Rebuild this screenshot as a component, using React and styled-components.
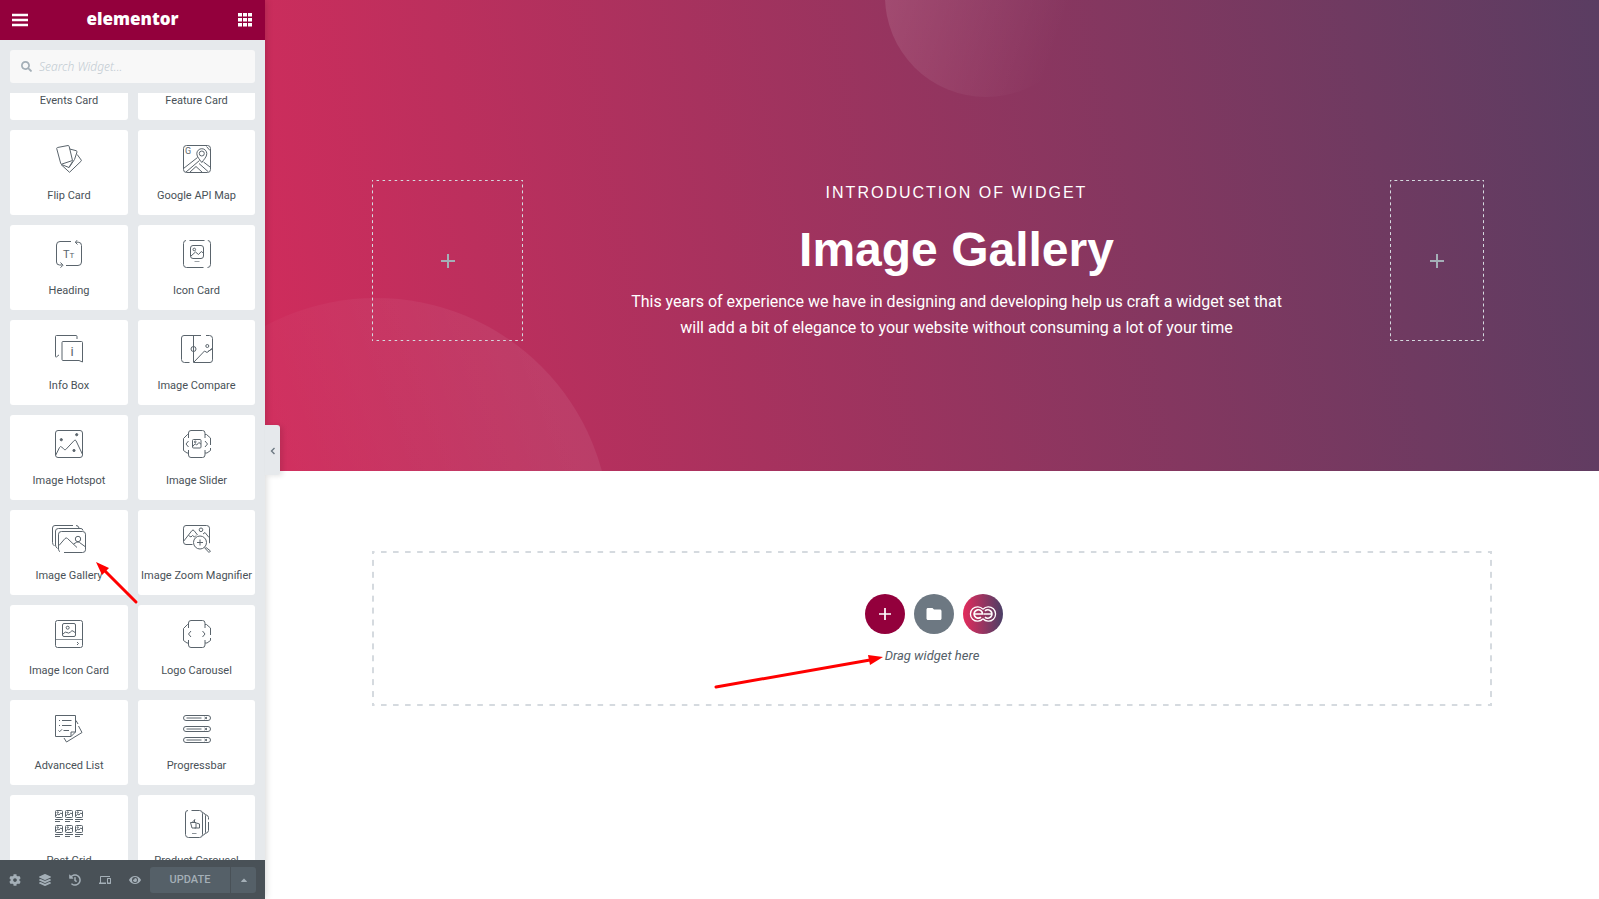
import React, { useEffect, useRef } from "react";
import styled, { createGlobalStyle, css } from "styled-components";
import {
  FaCog,
  FaLayerGroup,
  FaHistory,
  FaEye,
  FaCaretUp,
  FaSearch,
} from "react-icons/fa";
import { MdOutlineDevices, MdFolder } from "react-icons/md";

const LIST_SCROLL = 58;

/* Widget icons, drawn on a 36x28 grid */

const Letter = styled.text`
  font-size: ${(p) => p.$size}px;
  fill: currentColor;
  stroke: none;
`;

const ImageGlyph = ({ x, y, w, h }) => (
  <g>
    <rect x={x} y={y} width={w} height={h} rx="1" />
    <path
      d={`M${x} ${y + h * 0.85}l${w * 0.3} ${-h * 0.35} ${w * 0.2} ${h * 0.15} ${w * 0.25} ${-h * 0.3} ${w * 0.25} ${h * 0.2}`}
    />
    <circle cx={x + w * 0.32} cy={y + h * 0.28} r={w * 0.1} />
  </g>
);

const CarouselFrame = () => (
  <g>
    <path d="M9.5 8V3A2.5 2.5 0 0 1 12 .5h11.5A2.5 2.5 0 0 1 26 3v5" />
    <path d="M9.5 20v5a2.5 2.5 0 0 0 2.5 2.5h11.5A2.5 2.5 0 0 0 26 25v-5" />
    <path d="M9.5 4.5h-1l-4 4v12L8 23h1.5M26 4.5h1.5l4 3.5v7M31.5 18v2.5L28 23h-2" />
  </g>
);

const icons = {
  card: (
    <g>
      <rect x="4.5" y=".5" width="27" height="27" rx="3" />
      <path d="M4.5 9h27M10 16h16M10 21h10" />
    </g>
  ),
  flip: (
    <g>
      <path d="M6.5 2.5 17 .5q1 0 1.2 1l3.300 14-11 3.700q-.6 0-.8-.8L5.700 3.500q0-.8.8-1z" />
      <path d="M18.7 4l6.500 1.700q1 .4.8 1.300l-2.500 7.500-5.500 8-7.500-3" />
      <path d="M26.2 9.500l4 5.500q.4.600-.1 1.200L18.500 27.300 10 19.500M18 22.500l3.500-6" />
    </g>
  ),
  map: (
    <g>
      <rect x="4.5" y=".5" width="27" height="27" rx="3" />
      <path d="M22.8 17.500c-2-3-5-5.600-5-8.800a5 5 0 0 1 10 0c0 3.200-3 5.800-5 8.800z" />
      <circle cx="22.8" cy="8.5" r="2.5" />
      <path d="M4.5 23.500l14-11M7 27l13.500-11.500M10.500 27.500l6.500-6 6.500 6M20 18.500l9 8M24.500 17l6.500 5M27.500 1.500l3.500 4" />
      <Letter x="6" y="9" $size={9}>
        G
      </Letter>
    </g>
  ),
  heading: (
    <g>
      <path d="M20 1.500H9A3.500 3.500 0 0 0 5.500 5v17a3 3 0 0 0 3 3h2.800M9.500 22.500l2.500 2.700-2.500 2.500" />
      <path d="M15 25.500h12a3.500 3.500 0 0 0 3.500-3.500V5.500a3.300 3.300 0 0 0-3.300-3.300h-2.500M26.500 0l-2.300 2.200 2.300 2.300" />
      <Letter x="12" y="18" $size={11}>
        T
      </Letter>
      <Letter x="18.5" y="18" $size={8}>
        T
      </Letter>
    </g>
  ),
  iconCard: (
    <g>
      <path d="M7 .5Q4.500.5 4.500 3.500v21q0 3 3 3h17M28.500 27.500q3 0 3-3v-21q0-3-2.700-3M10.500.5h15" />
      <rect x="11.5" y="5.5" width="13" height="13" rx="2.5" />
      <path d="M12 16l4.500-4 3 2.500 2.800-3 2 1.500" />
      <circle cx="15.3" cy="9.5" r="1.3" />
      <path d="M15.5 21.500h5" opacity=".6" />
    </g>
  ),
  info: (
    <g>
      <path d="M26 4V1.500q0-1-1-1H5.500q-1 0-1 1V21.500q0 .8 1 .4l2.500-2" />
      <path d="M12 6.500h18.500q1 0 1 1v19.500l-3.500-1.500H12q-1 0-1-1v-17q0-1 1-1z" />
      <Letter x="19.5" y="20.5" $size={13}>
        i
      </Letter>
    </g>
  ),
  compare: (
    <g>
      <path d="M22 .5H5Q2.500.5 2.500 3v21.500q0 3 3 3h5M14.500.5v27h16.500q2.500 0 2.500-2.700V3.500q0-3-3-3H27" />
      <circle cx="14.5" cy="14" r="2.5" />
      <path d="M15 27l10.500-11 2.500 1.500 5-4M29 16.500l4-2.500" />
      <circle cx="28.3" cy="11" r="1.5" />
    </g>
  ),
  hotspot: (
    <g>
      <rect x="4.5" y=".5" width="27" height="27" rx="2.5" />
      <path d="M4.8 25l3.700-7.500q1-1.700 2.200-.5l2.500 2.500q.8.700 1.600 0l8.400-9q1-1 1.800.2l6.300 13.300" />
      <circle cx="10.3" cy="9.7" r="1.1" fill="currentColor" />
      <circle cx="25.7" cy="4.7" r="1.1" fill="currentColor" />
      <circle cx="23" cy="20.5" r="1.1" fill="currentColor" />
    </g>
  ),
  slider: (
    <g>
      <CarouselFrame />
      <path d="M9.5 11L7 14l2.500 3M26 11l2.500 3-2.500 3" />
      <ImageGlyph x={13.5} y={9.5} w={8.5} h={8.5} />
    </g>
  ),
  gallery: (
    <g>
      <path d="M22 .5H4Q1.500.5 1.500 3v14.500q0 2 2 3.500M25 .5q2.500 0 3 2.500" />
      <path d="M30 3.500H7.500q-3 0-3 2.500v14q0 2 2 3.500M30 3.500q1.500 0 2 2" />
      <path d="M13 27.500h18.500q3 0 3-2.700V9.200q0-2.700-3-2.700h-21q-3 0-3 2.700v15q0 1.800 1.500 2.500" />
      <path d="M8 20.500l6-7q1.200-1.200 2.500 0l9.500 9M22.500 19l3-1.700q1.700-.8 3 .2l5.500 4" />
      <circle cx="27" cy="14" r="2.7" />
    </g>
  ),
  zoom: (
    <g>
      <path d="M13.5 19.500H7q-2.500 0-2.500-2.700V3.200Q4.500.5 7 .5h20.500q3 0 3 2.700v15" />
      <path d="M4.8 16L13 5.500q1-1 2 0l3.500 4.500M9.500 10.500L12 12l1.500-1.500 2 1.500 1.500-1.500M24 9l2-1.500 4 5" />
      <circle cx="22" cy="4.8" r="1.8" />
      <circle cx="21" cy="17.5" r="6.5" />
      <path d="M21 14.500v6M18 17.500h6M25.500 22.500l1.500 1M27 22.500l4.500 3.500-1.500 1.500-4-4.200" />
    </g>
  ),
  imageIcon: (
    <g>
      <rect x="4.5" y=".5" width="27" height="27" rx="2" />
      <path d="M4.5 19.500h27" opacity=".7" />
      <rect x="11.5" y="3.5" width="13" height="13" rx="1.5" />
      <path d="M12 14q2.500-3 4-1.500t3.500-.5q1.500-2 2.500-1l2 1.500" />
      <circle cx="16.7" cy="7.7" r="1.5" />
      <path d="M26 22l1.500 1.500L26 25" />
    </g>
  ),
  carousel: (
    <g>
      <CarouselFrame />
      <path d="M12 11l-2.500 3 2.500 3M23.500 11l2.500 3-2.500 3" />
    </g>
  ),
  list: (
    <g>
      <path d="M20 21.500H4.500V.5h20V17zM20 21.500V17h4.500" />
      <path d="M11 5.500h9.500M11 10.500h9.500M12.500 15.500H18M8 5.500h1M8 10.500h1M7.500 15.500l1.200 1.200 2.300-2.400" />
      <path d="M25 5.500l2 3.500M27.500 11l3.500 6.500L15.500 27 13 23" />
    </g>
  ),
  progress: (
    <g>
      {[0.5, 11.5, 22.5].map((y) => (
        <g key={y}>
          <rect x="4.5" y={y} width="27" height="5" rx="2.5" />
          <path d={`M7.5 ${y + 2.5}h15M25.5 ${y + 1.5}l2.5 2m0-2l-2.5 2`} />
        </g>
      ))}
    </g>
  ),
  grid: (
    <g>
      {[0.5, 15.5].map((y) =>
        [4.5, 14.5, 24.5].map((x) => (
          <g key={`${x}-${y}`}>
            <ImageGlyph x={x} y={y} w={7} h={7} />
            <path d={`M${x - 0.5} ${y + 9}h8M${x - 0.5} ${y + 11}h5`} />
          </g>
        ))
      )}
    </g>
  ),
  product: (
    <g>
      <path d="M9 .5Q6.500.5 6.500 3v21.500q0 3 3 3h11q3 0 3-3V3.500q0-3-3-3h-8" />
      <path d="M23.500 2.500q3 .8 3 3v17q0 2-3 3M26.500 4.500q3 1 3 3v2M29.500 12v8.500q0 2-3 3" />
      <path d="M11.500 12.500H17V18h-4zM13 12.500l3-3M15.500 9.500v3M17.500 13l3 1v4h-5" />
      <path d="M13 23.500h4.500" opacity=".7" />
    </g>
  ),
};

const widgets = [
  { name: "Events Card", icon: "card" },
  { name: "Feature Card", icon: "card" },
  { name: "Flip Card", icon: "flip" },
  { name: "Google API Map", icon: "map" },
  { name: "Heading", icon: "heading" },
  { name: "Icon Card", icon: "iconCard" },
  { name: "Info Box", icon: "info" },
  { name: "Image Compare", icon: "compare" },
  { name: "Image Hotspot", icon: "hotspot" },
  { name: "Image Slider", icon: "slider" },
  { name: "Image Gallery", icon: "gallery", pointed: true },
  { name: "Image Zoom Magnifier", icon: "zoom" },
  { name: "Image Icon Card", icon: "imageIcon" },
  { name: "Logo Carousel", icon: "carousel" },
  { name: "Advanced List", icon: "list" },
  { name: "Progressbar", icon: "progress" },
  { name: "Post Grid", icon: "grid" },
  { name: "Product Carousel", icon: "product" },
];

const tools = [
  { name: "Settings", Icon: FaCog },
  { name: "Navigator", Icon: FaLayerGroup },
  { name: "History", Icon: FaHistory },
  { name: "Responsive Mode", Icon: MdOutlineDevices },
  { name: "Preview Changes", Icon: FaEye },
];

function Panel() {
  const listRef = useRef(null);

  useEffect(() => {
    listRef.current.scrollTop = LIST_SCROLL;
  }, []);

  return (
    <Sidebar>
      <PanelHeader>
        <HeaderButton aria-label="Menu">
          <svg width="18" height="14" viewBox="0 0 18 14">
            <path d="M1 2h16M1 7h16M1 12h16" stroke="#fff" strokeWidth="2.4" />
          </svg>
        </HeaderButton>
        <Brand>elementor</Brand>
        <HeaderButton aria-label="Widgets Panel">
          <svg width="14" height="14" viewBox="0 0 14 14" fill="#fff">
            {[0, 5, 10].map((y) =>
              [0, 5, 10].map((x) => (
                <rect key={`${x}-${y}`} x={x} y={y} width="4" height="3.5" />
              ))
            )}
          </svg>
        </HeaderButton>
      </PanelHeader>

      <SearchBox>
        <FaSearch size={11} aria-hidden="true" />
        <SearchInput
          type="text"
          placeholder="Search Widget..."
          aria-label="Search Widget"
        />
      </SearchBox>

      <WidgetList ref={listRef}>
        {widgets.map(({ name, icon, pointed }) => (
          <Widget key={name}>
            <WidgetIcon viewBox="0 0 36 28" aria-hidden="true">
              {icons[icon]}
            </WidgetIcon>
            {name}
            {pointed && (
              <WidgetArrow viewBox="0 0 44 44" aria-hidden="true">
                <path d="M41 41 10 10" />
                <polygon points="1,1 14,7 7,14" />
              </WidgetArrow>
            )}
          </Widget>
        ))}
      </WidgetList>

      <PanelFooter>
        {tools.map(({ name, Icon }) => (
          <ToolButton key={name} aria-label={name}>
            <Icon size={12} />
          </ToolButton>
        ))}
        <UpdateButton>UPDATE</UpdateButton>
        <OptionsButton aria-label="Save Options">
          <FaCaretUp size={10} />
        </OptionsButton>
      </PanelFooter>

      <CollapseButton aria-label="Hide Panel">
        <svg width="6" height="8" viewBox="0 0 6 8" fill="none">
          <path d="M4.5 1l-3 3 3 3" stroke="#6d7882" strokeWidth="1.4" />
        </svg>
      </CollapseButton>
    </Sidebar>
  );
}

const Plus = ({ size, weight }) => (
  <svg width={size} height={size} viewBox="0 0 14 14" aria-hidden="true">
    <path d="M7 0v14M0 7h14" stroke="currentColor" strokeWidth={weight} />
  </svg>
);

function Hero() {
  return (
    <HeroSection>
      <HeroShapes aria-hidden="true">
        <defs>
          <linearGradient id="glow-top" x1="0" y1="0.3" x2="0.9" y2="0.6">
            <stop offset="0" stopColor="#fff" stopOpacity="0.12" />
            <stop offset="1" stopColor="#fff" stopOpacity="0" />
          </linearGradient>
          <linearGradient id="glow-side" x1="0.9" y1="0.2" x2="0.1" y2="0.5">
            <stop offset="0" stopColor="#fff" stopOpacity="0.07" />
            <stop offset="1" stopColor="#fff" stopOpacity="0" />
          </linearGradient>
        </defs>
        <circle cx="721" cy="-4" r="101" fill="url(#glow-top)" />
        <circle cx="111" cy="532" r="234" fill="url(#glow-side)" />
      </HeroShapes>
      <HeroColumns>
        <EmptyColumn aria-label="Add Widget">
          <Plus size={14} weight={2} />
        </EmptyColumn>
        <HeroText>
          <Eyebrow>INTRODUCTION OF WIDGET</Eyebrow>
          <Title>Image Gallery</Title>
          <Lead>
            This years of experience we have in designing and developing help us
            craft a widget set that will add a bit of elegance to your website
            without consuming a lot of your time
          </Lead>
        </HeroText>
        <EmptyColumn aria-label="Add Widget">
          <Plus size={14} weight={2} />
        </EmptyColumn>
      </HeroColumns>
    </HeroSection>
  );
}

function DropArea() {
  return (
    <DropZone>
      <AddButtons>
        <RoundButton $bg="#93003c" aria-label="Add New Section">
          <Plus size={12} weight={2} />
        </RoundButton>
        <RoundButton $bg="#6d7882" aria-label="Add Template">
          <MdFolder size={18} />
        </RoundButton>
        <RoundButton
          $bg="linear-gradient(90deg, #e52b5c, #4a3f66)"
          aria-label="Add Exclusive Block"
        >
          <svg width="28" height="18" viewBox="0 0 28 18" fill="none">
            <g stroke="#fff" strokeWidth="1.3">
              <path d="M14 4.200A7.200 7.200 0 1 0 14 13.800" />
              <path d="M14 4.200A7.200 7.200 0 1 1 14 13.800" />
            </g>
            <g stroke="#fff" strokeWidth="1.7">
              <path d="M5.500 9h8A4.200 4.200 0 1 0 12 12.200" />
              <path d="M14.500 9h8M16 5.800a4.200 4.200 0 1 1 0 6.400" />
            </g>
          </svg>
        </RoundButton>
      </AddButtons>
      <DropHint>Drag widget here</DropHint>
      <DropArrow viewBox="0 0 170 36" aria-hidden="true">
        <path d="M2 33 156 6" />
        <polygon points="169,3 154,1 156,11" />
      </DropArrow>
    </DropZone>
  );
}

export default function App() {
  return (
    <Page>
      <GlobalStyle />
      <Panel />
      <Preview>
        <Hero />
        <DropArea />
      </Preview>
    </Page>
  );
}

const GlobalStyle = createGlobalStyle`
  *, *::before, *::after {
    box-sizing: border-box;
  }

  body {
    margin: 0;
    background: #fff;
    font-family: Roboto, "Liberation Sans", sans-serif;
  }

  button {
    padding: 0;
    border: 0;
    background: none;
    font: inherit;
    color: inherit;
    cursor: pointer;
  }
`;

/* Dashes and gaps of equal length, with a dash on every corner */
const dashedEdges = (width, dash) => css`
  --dash: #d5dadf 0 ${dash}px, transparent 0;
  background:
    linear-gradient(90deg, var(--dash)) -${dash / 2}px 0 / ${dash * 2}px ${width}px round no-repeat,
    linear-gradient(90deg, var(--dash)) -${dash / 2}px 100% / ${dash * 2}px ${width}px round no-repeat,
    linear-gradient(180deg, var(--dash)) 0 -${dash / 2}px / ${width}px ${dash * 2}px no-repeat round,
    linear-gradient(180deg, var(--dash)) 100% -${dash / 2}px / ${width}px ${dash * 2}px no-repeat round;
`;

const Page = styled.div`
  display: flex;
  height: 100vh;
  overflow: hidden;
`;

const Sidebar = styled.aside`
  position: relative;
  z-index: 1;
  display: flex;
  flex-direction: column;
  flex: none;
  width: 265px;
  background: #e6e9ec;
  box-shadow: 0 0 8px rgba(0, 0, 0, 0.2);
`;

const PanelHeader = styled.header`
  display: flex;
  align-items: center;
  justify-content: space-between;
  height: 40px;
  padding: 0 11px;
  background: #93003c;
`;

const HeaderButton = styled.button`
  display: grid;
  place-items: center;
  width: 18px;
  height: 40px;
`;

const Brand = styled.span`
  font-family: "Noto Sans", sans-serif;
  font-size: 17px;
  font-weight: 900;
  line-height: 38px;
  height: 40px;
  color: #fff;
`;

const SearchBox = styled.div`
  display: flex;
  align-items: center;
  gap: 7px;
  height: 33px;
  margin: 10px;
  padding: 0 11px;
  border-radius: 3px;
  background: #f8f8f8;
  color: #a4afb7;
`;

const SearchInput = styled.input`
  flex: 1;
  min-width: 0;
  padding: 0;
  border: 0;
  outline: 0;
  background: none;
  font-family: "Noto Sans", sans-serif;
  font-size: 12px;
  font-style: italic;
  font-weight: 300;
  color: #495157;

  &::placeholder {
    color: #c2cbd2;
    opacity: 1;
  }
`;

const WidgetList = styled.div`
  flex: 1;
  min-height: 0;
  display: grid;
  grid-template-columns: 118px 1fr;
  grid-auto-rows: 85px;
  gap: 10px;
  padding: 0 10px 10px;
  overflow-y: auto;
  scrollbar-width: none;
`;

const Widget = styled.button`
  position: relative;
  display: flex;
  flex-direction: column;
  align-items: center;
  gap: 15px;
  padding-top: 15px;
  border-radius: 3px;
  background: #fff;
  font-size: 11px;
  line-height: 16px;
  white-space: nowrap;
  color: #495157;
`;

const WidgetIcon = styled.svg`
  flex: none;
  width: 36px;
  height: 28px;
  fill: none;
  stroke: currentColor;
  stroke-width: 1;
  color: #5a646c;
`;

const Arrow = styled.svg`
  position: absolute;
  z-index: 2;
  fill: #f00;
  stroke: none;
  pointer-events: none;

  path {
    stroke: #f00;
    stroke-width: 3;
    stroke-linecap: round;
  }
`;

const WidgetArrow = styled(Arrow)`
  left: 85px;
  top: 51px;
  width: 44px;
  height: 44px;
`;

const PanelFooter = styled.footer`
  display: flex;
  align-items: center;
  height: 39px;
  padding-right: 9px;
  background: #495157;
  color: #a4afb7;
`;

const ToolButton = styled.button`
  display: grid;
  place-items: center;
  width: 30px;
  height: 39px;
`;

const UpdateButton = styled.button`
  flex: 1;
  height: 26px;
  border-radius: 3px 0 0 3px;
  background: #556068;
  font-size: 11px;
  font-weight: 500;
`;

const OptionsButton = styled.button`
  display: grid;
  place-items: center;
  width: 26px;
  height: 26px;
  border-left: 1px solid #495157;
  border-radius: 0 3px 3px 0;
  background: #556068;
`;

const CollapseButton = styled.button`
  position: absolute;
  left: 100%;
  top: 50%;
  width: 15px;
  height: 50px;
  transform: translateY(-50%);
  border-radius: 0 3px 3px 0;
  background: #e6e9ec;
  box-shadow: 3px 1px 5px rgba(0, 0, 0, 0.1);
`;

const Preview = styled.main`
  flex: 1;
  min-width: 0;
  overflow: hidden;
`;

const HeroSection = styled.section`
  position: relative;
  padding: 180px 20px 130px;
  background: linear-gradient(80deg, #d12c5c, #5a3d62);
`;

const HeroShapes = styled.svg`
  position: absolute;
  inset: 0;
  width: 100%;
  height: 100%;
`;

const HeroColumns = styled.div`
  position: relative;
  display: grid;
  grid-template-columns: 151fr 867fr 94fr;
  max-width: 1120px;
  margin: 0 auto;
  padding-right: 8px;
`;

const EmptyColumn = styled.button`
  display: grid;
  place-items: center;
  color: #a4afb7;
  ${dashedEdges(1, 3)}
`;

const HeroText = styled.div`
  text-align: center;
  color: #fff;
`;

const Eyebrow = styled.p`
  margin: 0;
  font-family: "Liberation Sans", Arial, sans-serif;
  font-size: 16px;
  line-height: 26px;
  letter-spacing: 2px;
`;

const Title = styled.h1`
  margin: 20px 0 15px;
  font-family: "Liberation Sans", Arial, sans-serif;
  font-size: 48px;
  font-weight: 700;
  line-height: 48px;
`;

const Lead = styled.p`
  max-width: 660px;
  margin: 0 auto;
  font-size: 16px;
  line-height: 26px;
`;

const DropZone = styled.section`
  position: relative;
  display: flex;
  flex-direction: column;
  align-items: center;
  gap: 15px;
  max-width: 1120px;
  margin: 80px auto;
  padding: 43px 2px;
  ${dashedEdges(2, 6)}
`;

const AddButtons = styled.div`
  display: flex;
  gap: 9px;
  padding-left: 4px;
`;

const RoundButton = styled.button`
  display: grid;
  place-items: center;
  width: 40px;
  height: 40px;
  border-radius: 50%;
  background: ${(p) => p.$bg};
  color: #fff;
`;

const DropHint = styled.p`
  margin: 0;
  font-size: 13px;
  font-style: italic;
  line-height: 14px;
  color: #556068;
`;

const DropArrow = styled(Arrow)`
  right: calc(50% + 48px);
  bottom: 16px;
  width: 170px;
  height: 36px;
`;
